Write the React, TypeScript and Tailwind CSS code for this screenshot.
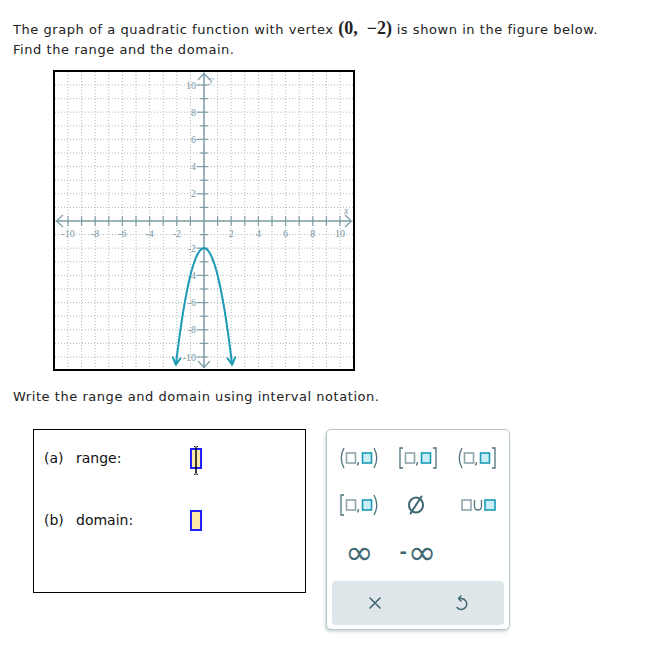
import React from "react";

const S = 13.6;
const OX = 149;
const OY = 149;
const X = (x: number) => OX + x * S;
const Y = (y: number) => OY - y * S;

function arrowHead(tx: number, ty: number, dx: number, dy: number, len = 8, ang = 0.5) {
  const l = Math.hypot(dx, dy);
  const ux = -dx / l;
  const uy = -dy / l;
  const rot = (a: number) => [ux * Math.cos(a) - uy * Math.sin(a), ux * Math.sin(a) + uy * Math.cos(a)];
  const [ax, ay] = rot(ang);
  const [bx, by] = rot(-ang);
  return `M${tx + ax * len} ${ty + ay * len} L${tx} ${ty} L${tx + bx * len} ${ty + by * len}`;
}

function Graph() {
  const gridC = "#a9bcc2";
  const axisC = "#7f9ea7";
  const labC = "#7a979f";
  const ints: number[] = [];
  for (let i = -11; i <= 11; i++) ints.push(i);
  const pts: string[] = [];
  const xe = 2.07;
  for (let x = -xe; x <= xe + 0.0001; x += 0.03) {
    const y = -2 * x * x - 2;
    pts.push(`${X(x).toFixed(2)},${Y(y).toFixed(2)}`);
  }
  const yEnd = -2 * xe * xe - 2;
  const slope = 4 * xe * S;
  const leftHead = arrowHead(X(-xe), Y(yEnd), -1, slope / S, 8, 0.5);
  const rightHead = arrowHead(X(xe), Y(yEnd), 1, slope / S, 8, 0.5);
  return (
    <div className="ml-[40px] mt-[10px] w-[302px] h-[301px] border-2 border-black bg-white">
      <svg width="298" height="297" viewBox="0 0 298 297" className="block">
        {ints.map((i) =>
          X(i) > 0 && X(i) < 298 ? (
            <line key={"v" + i} x1={X(i)} y1={0} x2={X(i)} y2={297} stroke={gridC} strokeWidth={1} strokeDasharray="1 2" />
          ) : null
        )}
        {ints.map((i) =>
          Y(i) > 0 && Y(i) < 297 ? (
            <line key={"h" + i} x1={0} y1={Y(i)} x2={298} y2={Y(i)} stroke={gridC} strokeWidth={1} strokeDasharray="1 2" />
          ) : null
        )}
        <line x1={1} y1={OY} x2={296} y2={OY} stroke={axisC} strokeWidth={1.5} />
        <line x1={OX} y1={1} x2={OX} y2={296} stroke={axisC} strokeWidth={1.5} />
        <path d={`M8 ${OY - 6} L1.5 ${OY} L8 ${OY + 6}`} fill="none" stroke={axisC} strokeWidth={1.2} />
        <path d={`M290 ${OY - 6} L296.5 ${OY} L290 ${OY + 6}`} fill="none" stroke={axisC} strokeWidth={1.2} />
        <path d={`M${OX - 6} 8 L${OX} 1.5 L${OX + 6} 8`} fill="none" stroke={axisC} strokeWidth={1.2} />
        <path d={`M${OX - 6} 289 L${OX} 295.5 L${OX + 6} 289`} fill="none" stroke={axisC} strokeWidth={1.2} />
        {ints
          .filter((i) => i !== 0 && Math.abs(i) <= 10)
          .map((i) => (
            <g key={"t" + i}>
              <line x1={X(i)} y1={OY - 5} x2={X(i)} y2={OY + 5} stroke={axisC} strokeWidth={1.2} />
              <line x1={i % 2 === 0 ? OX - 7 : OX - 4} y1={Y(i)} x2={OX + 4} y2={Y(i)} stroke={axisC} strokeWidth={1.2} />
            </g>
          ))}
        {[-10, -8, -6, -4, -2, 2, 4, 6, 8, 10].map((i) => (
          <g key={"l" + i}>
            <text x={X(i)} y={OY + 16} textAnchor="middle" fontSize="10" fontFamily="'Liberation Serif', serif" fill={labC}>
              {i < 0 ? "-" + Math.abs(i) : String(i)}
            </text>
            <text x={OX - 8} y={Y(i) + 3.5} textAnchor="end" fontSize="10" fontFamily="'Liberation Serif', serif" fill={labC}>
              {i < 0 ? "-" + Math.abs(i) : String(i)}
            </text>
          </g>
        ))}
        <text x={289} y={142} fontSize="10" fontStyle="italic" fontFamily="'Liberation Serif', serif" fill={labC}>
          x
        </text>
        <text x={154} y={11} fontSize="10" fontStyle="italic" fontFamily="'Liberation Serif', serif" fill={labC}>
          y
        </text>
        <polyline points={pts.join(" ")} fill="none" stroke="#1a9ab4" strokeWidth={2} strokeLinejoin="round" />
        <path d={leftHead} fill="none" stroke="#1a9ab4" strokeWidth={2} strokeLinecap="round" strokeLinejoin="round" />
        <path d={rightHead} fill="none" stroke="#1a9ab4" strokeWidth={2} strokeLinecap="round" strokeLinejoin="round" />
      </svg>
    </div>
  );
}

function Interval({ left, right }: { left: "(" | "["; right: ")" | "]" }) {
  const c = "#4f727c";
  return (
    <svg width="40" height="22" viewBox="0 0 40 22" className="block">
      {left === "(" ? (
        <path d="M5 1 Q-0.5 11 5 21" fill="none" stroke={c} strokeWidth={1.3} />
      ) : (
        <path d="M5 1 H2 V21 H5" fill="none" stroke={c} strokeWidth={1.3} />
      )}
      <rect x={7.5} y={6} width={9} height={10} fill="#ffffff" stroke="#8fa5ac" strokeWidth={1.6} />
      <path d="M19.3 15 v1.6 l-0.9 1.8" fill="none" stroke={c} strokeWidth={1.3} />
      <rect x={23.5} y={6} width={9} height={10} fill="#c8eef6" stroke="#1b9ab5" strokeWidth={1.6} />
      {right === ")" ? (
        <path d="M35 1 Q40.5 11 35 21" fill="none" stroke={c} strokeWidth={1.3} />
      ) : (
        <path d="M35 1 H38 V21 H35" fill="none" stroke={c} strokeWidth={1.3} />
      )}
    </svg>
  );
}

function Union() {
  return (
    <svg width="36" height="16" viewBox="0 0 36 16" className="block">
      <rect x={1} y={3} width={9} height={10} fill="#ffffff" stroke="#8fa5ac" strokeWidth={1.6} />
      <path d="M13.5 3 V9 Q13.5 13 17 13 Q20.5 13 20.5 9 V3" fill="none" stroke="#4f727c" strokeWidth={1.3} />
      <rect x={24} y={3} width={10} height={10} fill="#c8eef6" stroke="#1b9ab5" strokeWidth={1.6} />
    </svg>
  );
}

function EmptySet() {
  return (
    <svg width="22" height="22" viewBox="0 0 22 22" className="block">
      <ellipse cx={11} cy={11} rx={7} ry={7.5} fill="none" stroke="#3f6872" strokeWidth={2} />
      <path d="M16.5 2.5 L5.5 19.5" stroke="#3f6872" strokeWidth={2} strokeLinecap="round" />
    </svg>
  );
}

function Keypad() {
  return (
    <div className="ml-[20px] w-[184px] h-[201px] rounded-[5px] border border-[#b7c6cc] bg-white shadow-[-1px_2px_3px_rgba(120,140,150,0.35)] flex flex-col">
      <div className="pt-[4px] px-[3px] grid grid-cols-3 grid-rows-[47px_47px_47px]">
        <div className="flex items-center justify-center"><Interval left="(" right=")" /></div>
        <div className="flex items-center justify-center"><Interval left="[" right="]" /></div>
        <div className="flex items-center justify-center"><Interval left="(" right="]" /></div>
        <div className="flex items-center justify-center"><Interval left="[" right=")" /></div>
        <div className="flex items-center justify-center pr-[3px]"><EmptySet /></div>
        <div className="flex items-center justify-center pl-[4px]"><Union /></div>
        <div className="flex items-center justify-center text-[34px] leading-none text-[#3f6872] font-['DejaVu_Sans',sans-serif]">∞</div>
        <div className="flex items-center justify-center text-[34px] leading-none text-[#3f6872] font-['DejaVu_Sans',sans-serif]">
          <span className="text-[18px] mr-[1px] font-bold">-</span>∞
        </div>
        <div />
      </div>
      <div className="mt-[6px] mx-[5px] h-[44px] rounded-[4px] bg-[#dfe6e9] grid grid-cols-2">
        <div className="flex items-center justify-center">
          <svg width="16" height="16" viewBox="0 0 16 16">
            <path d="M3 3 L13 13 M13 3 L3 13" stroke="#3f6872" strokeWidth={1.6} strokeLinecap="round" />
          </svg>
        </div>
        <div className="flex items-center justify-center">
          <svg width="18" height="18" viewBox="0 0 18 18">
            <path d="M7 4.5 H9.5 A5.5 5.5 0 1 1 5 13.5" fill="none" stroke="#3f6872" strokeWidth={1.5} strokeLinecap="round" />
            <path d="M9 2 L6.5 4.5 L9 7" fill="none" stroke="#3f6872" strokeWidth={1.5} strokeLinecap="round" strokeLinejoin="round" />
          </svg>
        </div>
      </div>
    </div>
  );
}

function InputBox({ caret }: { caret?: boolean }) {
  return (
    <div className="relative w-[12px] h-[21px] border-2 border-[#1f1fff] bg-[#fde9a9]">
      {caret && (
        <svg className="absolute left-[-4px] top-[-5px]" width="16" height="31" viewBox="0 0 16 31">
          <path d="M8 3 V28" stroke="#000" strokeWidth={1.5} />
          <path d="M6 1.5 Q8 3 10 1.5 M6 29.5 Q8 28 10 29.5" fill="none" stroke="#000" strokeWidth={1} />
        </svg>
      )}
    </div>
  );
}

function AnswerBox() {
  return (
    <div className="ml-[20px] w-[273px] h-[164px] border border-black bg-white text-[14px] text-[#111] pl-[10px]">
      <div className="mt-[18px] h-[21px] flex items-center">
        <span className="w-[32px]">(a)</span>
        <span className="w-[114px]">range:</span>
        <InputBox caret />
      </div>
      <div className="mt-[41px] h-[21px] flex items-center">
        <span className="w-[32px]">(b)</span>
        <span className="w-[114px]">domain:</span>
        <InputBox />
      </div>
    </div>
  );
}

export default function App() {
  return (
    <div className="w-[654px] h-[669px] bg-white text-[#222] font-['DejaVu_Sans','Liberation_Sans',sans-serif] text-[13px] pl-[13px] pt-[20px]">
      <p className="leading-[20px] h-[40px] tracking-[0.55px]">
        The graph of a quadratic function with vertex{" "}
        <span className="font-['Liberation_Serif',serif] text-[18px] font-semibold leading-[0px] tracking-normal">
          (0,&nbsp;&nbsp;−2)
        </span>{" "}
        is shown in the figure below.
        <br />
        Find the range and the domain.
      </p>
      <Graph />
      <p className="mt-[16px] leading-[20px] tracking-[0.55px]">Write the range and domain using interval notation.</p>
      <div className="mt-[22px] flex items-start">
        <AnswerBox />
        <Keypad />
      </div>
    </div>
  );
}
